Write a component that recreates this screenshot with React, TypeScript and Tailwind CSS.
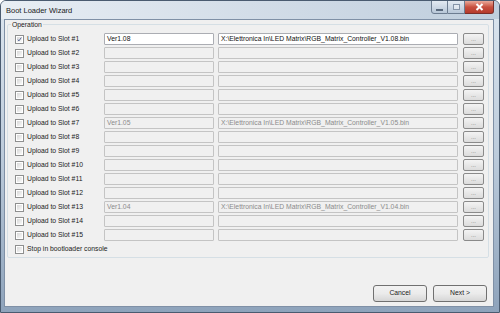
import React from "react";

type Slot = { n: number; ver?: string; path?: string; checked?: boolean; enabled?: boolean };

const slots: Slot[] = Array.from({ length: 15 }, (_, i) => ({ n: i + 1 }));
slots[0] = { n: 1, ver: "Ver1.08", path: "X:\\Elettronica In\\LED Matrix\\RGB_Matrix_Controller_V1.08.bin", checked: true, enabled: true };
slots[6] = { n: 7, ver: "Ver1.05", path: "X:\\Elettronica In\\LED Matrix\\RGB_Matrix_Controller_V1.05.bin" };
slots[12] = { n: 13, ver: "Ver1.04", path: "X:\\Elettronica In\\LED Matrix\\RGB_Matrix_Controller_V1.04.bin" };

function CheckBox({ checked }: { checked?: boolean }) {
  return (
    <div className="w-[9px] h-[9px] shrink-0 border border-[#8e8f8f] bg-white p-[1px]">
      <div className="w-full h-full bg-gradient-to-br from-[#d8d8d8] to-[#f9f9f9] flex items-center justify-center">
        {checked && (
          <svg width="7" height="7" viewBox="0 0 7 7">
            <path d="M1 3.6 L2.8 5.4 L6 0.8" fill="none" stroke="#3d4f8a" strokeWidth="1.2" />
          </svg>
        )}
      </div>
    </div>
  );
}

function TextBox({ text, enabled, w }: { text?: string; enabled?: boolean; w: string }) {
  return (
    <div
      className={`${w} h-[12px] shrink-0 rounded-[1px] border px-[2px] flex items-center text-[6.8px] leading-none whitespace-nowrap overflow-hidden ${
        enabled ? "bg-white border-[#abadb3] text-[#111]" : "bg-[#f0f0f0] border-[#c4c4c4] text-[#8b8b8b]"
      }`}
    >
      {text}
    </div>
  );
}

function DotsButton() {
  return (
    <div className="w-[21px] h-[12px] shrink-0 rounded-[2px] border border-[#8a8a8a] bg-gradient-to-b from-[#f3f3f3] to-[#dcdcdc] flex items-end justify-center pb-[2px]">
      <span className="text-[6px] leading-none text-[#777]">...</span>
    </div>
  );
}

function WinButton({ children, className }: { children: React.ReactNode; className: string }) {
  return (
    <div className={`h-[14px] flex items-center justify-center border border-[#6d7d91] ${className}`}>{children}</div>
  );
}

export default function App() {
  return (
    <div className="w-[500px] h-[313px] flex flex-col overflow-hidden rounded-t-[6px] border border-[#4a5b70] bg-gradient-to-b from-[#dde6ef] via-[#bccbdb] to-[#8ea3bb] font-['Liberation_Sans',Arial,sans-serif] text-[#1b1b1b]">
      {/* title bar */}
      <div className="h-[18px] flex items-start justify-between pl-[5px] pr-[5px] bg-gradient-to-r from-[#e8eef4] via-[#d3dde8] to-[#bfcedd]">
        <span className="text-[7.5px] leading-none mt-[6px] text-[#1a1a1a]">Boot Loader Wizard</span>
        <div className="flex -mt-[1px]">
          <WinButton className="w-[17px] rounded-bl-[3px] bg-gradient-to-b from-[#e3eaf2] to-[#b8c7d8]">
            <div className="w-[7px] h-[2px] mt-[5px] bg-white border border-[#59697d]" />
          </WinButton>
          <WinButton className="w-[17px] border-l-0 bg-gradient-to-b from-[#e3eaf2] to-[#b8c7d8]">
            <div className="w-[7px] h-[6px] border border-[#8594a8] bg-white/40" />
          </WinButton>
          <WinButton className="w-[29px] border-l-0 rounded-br-[3px] border-[#7a2f2a] bg-gradient-to-b from-[#e9a99a] via-[#c8503f] to-[#b53a2c]">
            <svg width="9" height="8" viewBox="0 0 9 8">
              <path d="M1.5 1 L7.5 7 M7.5 1 L1.5 7" stroke="#fff" strokeWidth="2" />
            </svg>
          </WinButton>
        </div>
      </div>

      {/* client */}
      <div className="flex-1 ml-[3px] mr-[5px] mb-[5px] border border-[#7f90a6] bg-[#f0f0f0] flex flex-col">
        <fieldset className="ml-[2px] mr-[4px] border border-[#d5dfe5] rounded-[2px] px-0 pb-[2px]">
          <legend className="ml-[3px] px-[1px] text-[6.8px] leading-[9px]">Operation</legend>
          <div className="flex flex-col gap-[2px] mt-[4px]">
            {slots.map((s) => (
              <div key={s.n} className="flex items-center h-[12px]">
                <div className="w-[96px] pl-[7px] flex items-center gap-[3px]">
                  <CheckBox checked={s.checked} />
                  <span className="text-[6.8px] leading-none whitespace-nowrap">Upload to Slot #{s.n}</span>
                </div>
                <TextBox w="w-[110px]" text={s.ver} enabled={s.enabled} />
                <div className="w-[4px]" />
                <TextBox w="w-[240px]" text={s.path} enabled={s.enabled} />
                <div className="w-[5px]" />
                <DotsButton />
              </div>
            ))}
            <div className="flex items-center h-[12px] pl-[7px] gap-[3px]">
              <CheckBox />
              <span className="text-[6.8px] leading-none">Stop in bootloader console</span>
            </div>
          </div>
        </fieldset>

        <div className="flex-1" />
        <div className="flex justify-end gap-[6px] pr-[6px] pb-[4px]">
          <button className="w-[54px] h-[17px] rounded-[3px] border border-[#707070] bg-gradient-to-b from-[#f2f2f2] via-[#ebebeb] to-[#d6d6d6] text-[6.8px] leading-none">
            Cancel
          </button>
          <button className="w-[54px] h-[17px] rounded-[3px] border border-[#707070] bg-gradient-to-b from-[#f2f2f2] via-[#ebebeb] to-[#d6d6d6] text-[6.8px] leading-none">
            Next &gt;
          </button>
        </div>
      </div>
    </div>
  );
}
